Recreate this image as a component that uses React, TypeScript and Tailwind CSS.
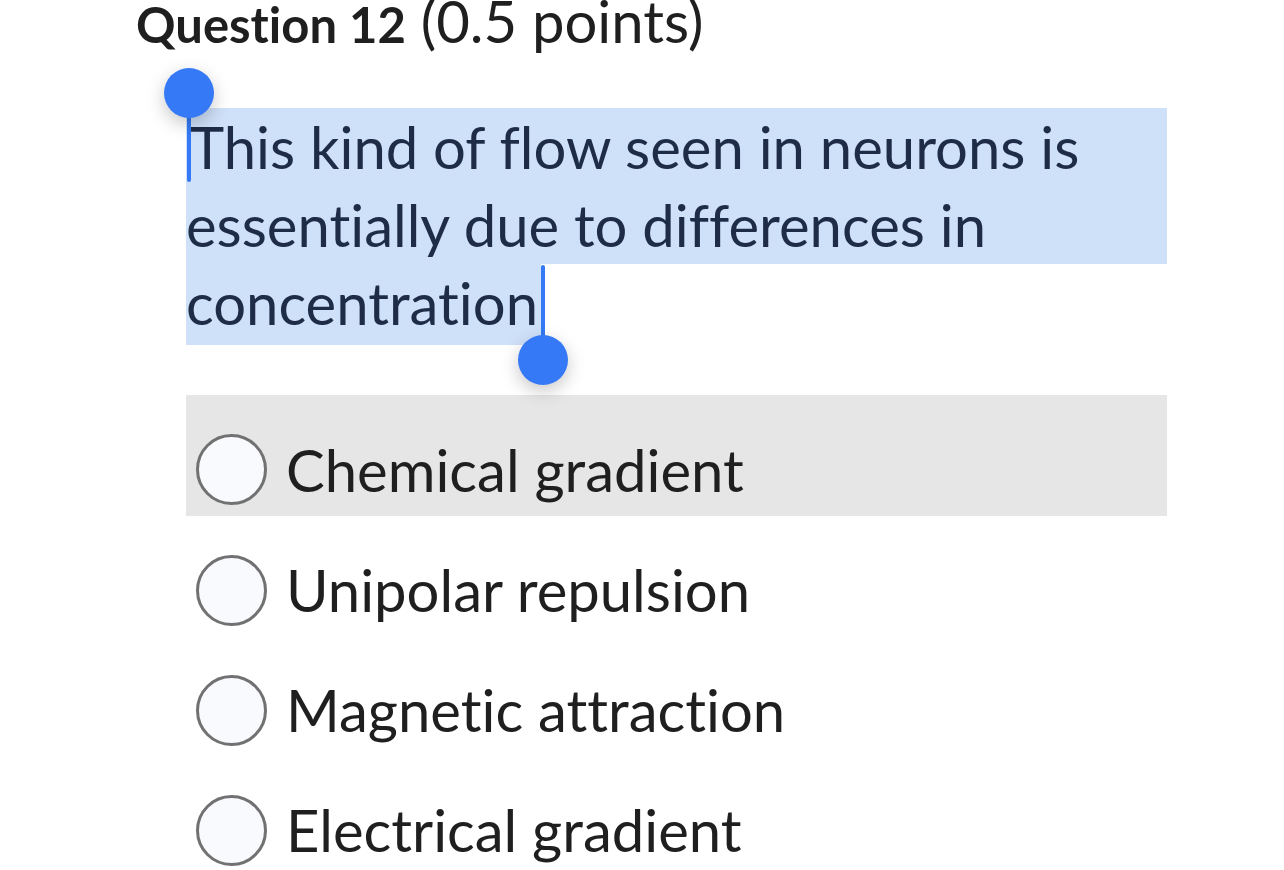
import React from 'react';

const options = ['Chemical gradient', 'Unipolar repulsion', 'Magnetic attraction', 'Electrical gradient'];

const Handle: React.FC<{ className: string }> = ({ className }) => (
  <div className={`absolute w-[50px] h-[50px] rounded-full bg-[#3579f6] shadow-[0_6px_18px_rgba(0,0,0,0.22)] ${className}`} />
);

const App: React.FC = () => {
  return (
    <div className="w-[1284px] h-[870px] bg-white overflow-hidden font-['Lato','Noto_Sans',sans-serif] [font-variant-ligatures:none]">
      <div className="pl-[136px] h-[48px] leading-[48px] text-[#1f1f1f] whitespace-nowrap">
        <span className="font-bold text-[49px]">Question 12</span>
        <span className="text-[58px] leading-[40px]"> (0.5 points)</span>
      </div>

      <div className="relative ml-[186px] mt-[60px] w-[981px] text-[58px] leading-[78px] text-[#1e2c47]">
        <div className="bg-[#cfe1f9] pl-[4px]">
          This kind of flow seen in neurons is
          <br />
          <span className="-ml-[4px]">essentially due to differences in</span>
        </div>
        <div className="inline-block h-[81px] bg-[#cfe1f9] pr-[3px]">concentration</div>

        {/* selection handles */}
        <div className="absolute left-[1px] top-[6px] w-[4px] h-[68px] rounded-full bg-[#3579f6]" />
        <Handle className="-left-[22px] -top-[40px]" />
        <div className="absolute left-[355px] top-[157px] w-[4px] h-[80px] rounded-full bg-[#3579f6]" />
        <Handle className="left-[332px] top-[227px]" />
      </div>

      <div className="mt-[50px] ml-[186px] w-[981px]">
        {options.map((o, i) => (
          <div
            key={o}
            className={`flex items-center gap-[19px] pl-[10px] pt-[28px] ${i === 0 ? 'h-[121px] bg-[#e6e6e6]' : 'h-[120px]'}`}
          >
            <div className="w-[71px] h-[71px] shrink-0 rounded-full border-[3px] border-[#717171] bg-[#f9fafe]" />
            <span className="text-[58px] leading-none text-[#1f1f1f] whitespace-nowrap">{o}</span>
          </div>
        ))}
      </div>
    </div>
  );
};

export default App;
